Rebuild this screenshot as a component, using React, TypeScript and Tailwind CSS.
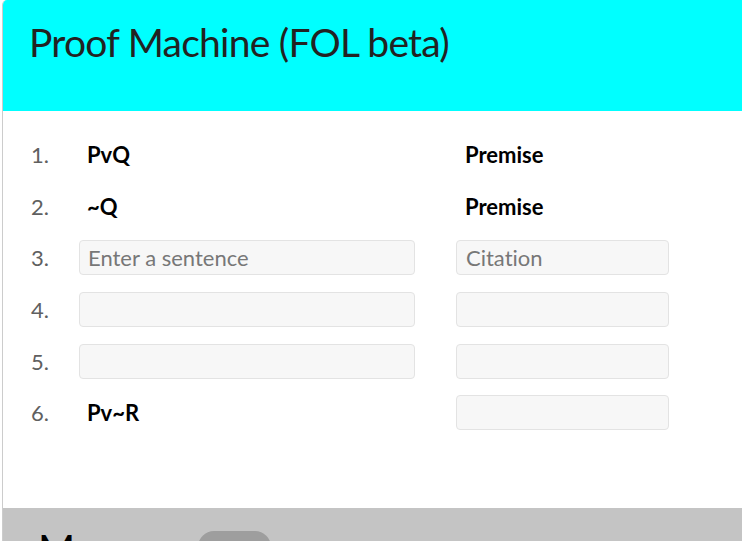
import React from "react";

const rows: { n: number; s?: string; c?: string; sInput?: boolean; cInput?: boolean; sPh?: string; cPh?: string }[] = [
  { n: 1, s: "PvQ", c: "Premise" },
  { n: 2, s: "~Q", c: "Premise" },
  { n: 3, sInput: true, cInput: true, sPh: "Enter a sentence", cPh: "Citation" },
  { n: 4, sInput: true, cInput: true },
  { n: 5, sInput: true, cInput: true },
  { n: 6, s: "Pv~R", cInput: true },
];

export default function App() {
  return (
    <div className="min-h-screen bg-white pl-[2px] [font-variant-ligatures:none]" style={{ fontFamily: "Lato, 'Open Sans', sans-serif" }}>
      <div className="border-l border-[#cccccc] rounded-tl-[5px] overflow-hidden">
        <div className="bg-[#00ffff] h-[111px] pl-[26px] pt-[16px]">
          <h1 className="text-[39px] leading-[52px] tracking-[-0.75px] font-normal text-[#222222]">Proof Machine (FOL beta)</h1>
        </div>
        <div className="pt-[18px] pb-[69px]">
          {rows.map((r) => (
            <div key={r.n} className="flex items-center h-[51.6px]">
              <div className="w-[76px] pl-[28px] text-[22px] text-[#606060]">{r.n}.</div>
              <div className="w-[336px]">
                {r.sInput ? (
                  <div className="h-[35px] rounded-[4px] border border-[#e3e3e3] bg-[#f7f7f7] pl-[8px] flex items-center text-[22px] text-[#777777]">
                    {r.sPh}
                  </div>
                ) : (
                  <div className="pl-[8px] text-[22px] font-bold text-black">{r.s}</div>
                )}
              </div>
              <div className="w-[41px]" />
              <div className="w-[213px]">
                {r.cInput ? (
                  <div className="h-[35px] rounded-[4px] border border-[#e3e3e3] bg-[#f7f7f7] pl-[9px] flex items-center text-[22px] text-[#777777]">
                    {r.cPh}
                  </div>
                ) : (
                  <div className="pl-[9px] text-[22px] font-bold text-black">{r.c}</div>
                )}
              </div>
            </div>
          ))}
        </div>
        <div className="bg-[#c4c4c4] h-[80px] flex items-start pt-[21px] pl-[35px]">
          <div className="text-[40px] leading-none text-black w-[160px]">Messages</div>
          <div className="mt-[2px] w-[73px] h-[40px] rounded-[16px] bg-[#9e9e9e]" />
        </div>
      </div>
    </div>
  );
}
